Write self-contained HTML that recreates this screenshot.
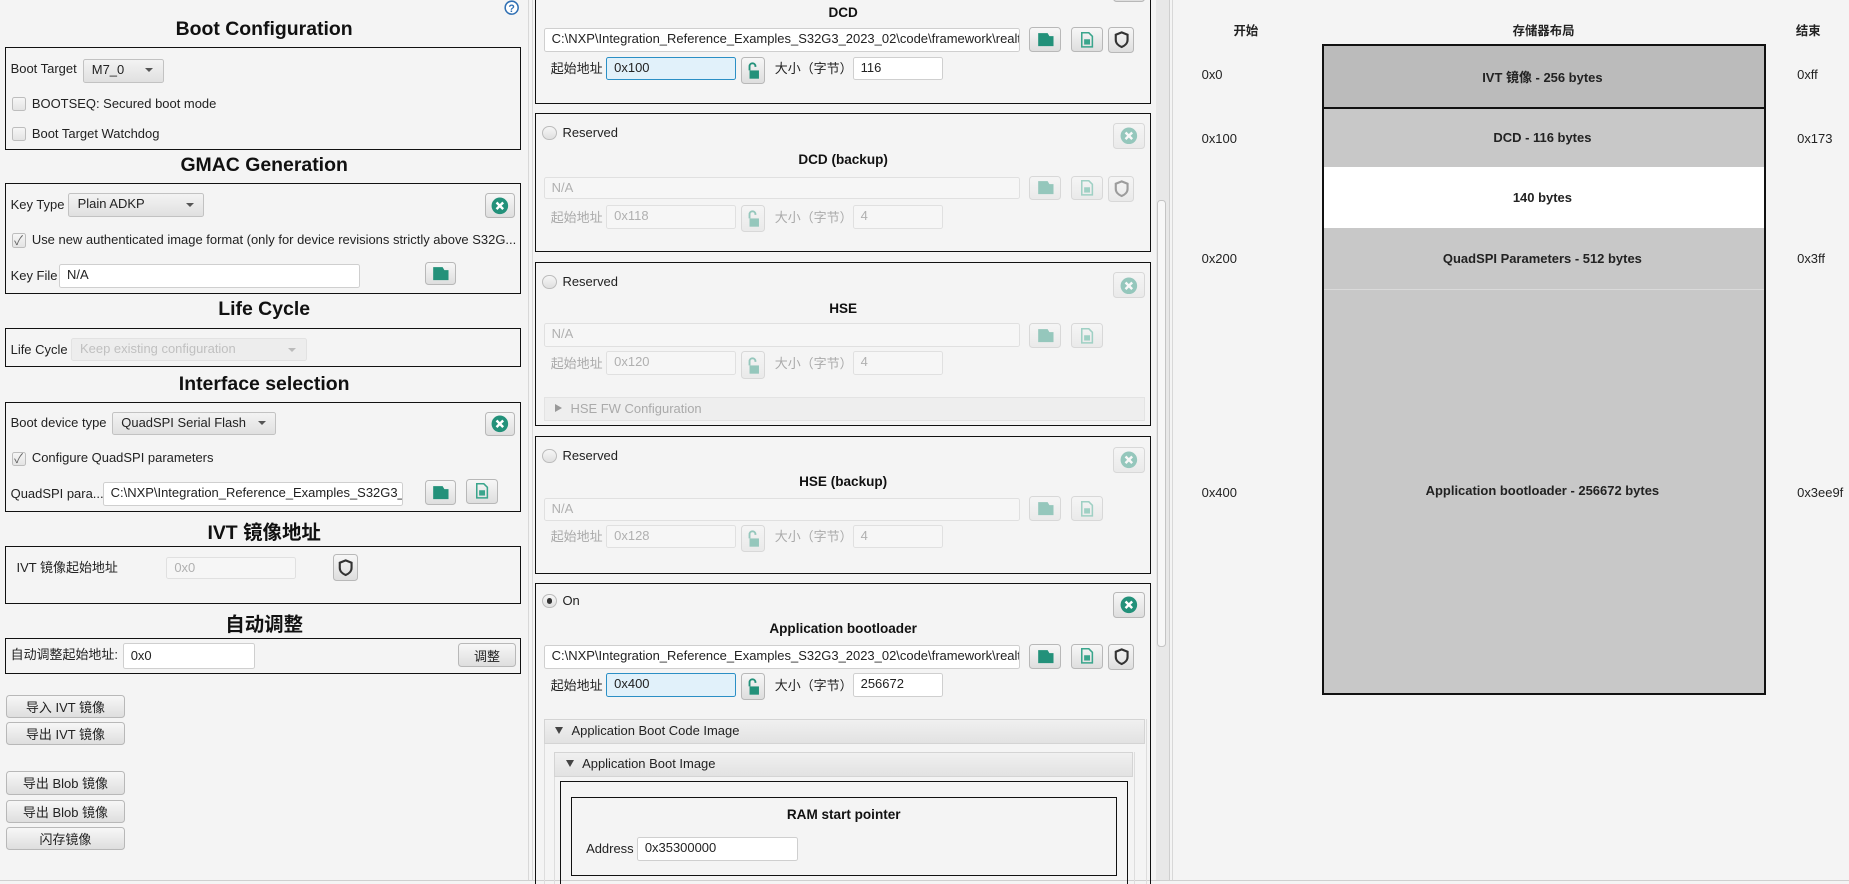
<!DOCTYPE html>
<html><head><meta charset="utf-8">
<style>
html,body{margin:0;padding:0;width:1849px;height:884px;overflow:hidden;background:#f4f4f4;}
#root{position:relative;width:1568px;height:750px;zoom:1.17921;background:#f4f4f4;font-family:"Liberation Sans","Noto Sans CJK SC",sans-serif;font-size:11px;color:#222;overflow:hidden;}
.a{position:absolute;}
.t{position:absolute;font-weight:bold;font-size:16.5px;color:#111;text-align:center;white-space:nowrap;}
.box{position:absolute;border:1.3px solid #111;box-sizing:border-box;}
.lb{position:absolute;white-space:nowrap;line-height:14px;}
.in{position:absolute;background:#fff;border:1px solid #cfcfcf;border-radius:2px;box-sizing:border-box;padding-left:6px;line-height:17px;white-space:nowrap;overflow:hidden;}
.in.dis{background:#f6f6f6;color:#b0b0b0;border-color:#e0e0e0;}
.in.sel{background:#e1f1fa;border:1.5px solid #2b8fc5;}
.btn{position:absolute;background:linear-gradient(#f7f7f7,#dedede);border:1px solid #b8b8b8;border-radius:3px;box-sizing:border-box;text-align:center;white-space:nowrap;display:flex;align-items:center;justify-content:center;}
.btn.dis{opacity:.45;}
.cb{position:absolute;width:12px;height:12px;border:1px solid #bdbdbd;border-radius:2px;background:linear-gradient(#f6f6f6,#e4e4e4);box-sizing:border-box;}
.combo{position:absolute;background:linear-gradient(#f3f3f3,#e0e0e0);border:1px solid #c2c2c2;border-radius:2px;box-sizing:border-box;padding-left:7px;line-height:17px;white-space:nowrap;}
.combo:after{content:"";position:absolute;right:8px;top:7px;border-left:4px solid transparent;border-right:4px solid transparent;border-top:4px solid #555;}
.combo.dis{color:#c0c0c0;background:#ededed;border-color:#e2e2e2;}
.combo.dis:after{border-top-color:#bbb;}
.radio{position:absolute;width:12px;height:12px;border-radius:50%;border:1px solid #bcbcbc;background:linear-gradient(#f6f6f6,#e0e0e0);box-sizing:border-box;}
.bar{position:absolute;background:linear-gradient(#f0f0f0,#e2e2e2);border:1px solid #d4d4d4;box-sizing:border-box;line-height:18px;padding-left:9px;white-space:nowrap;}
.bar:before{content:"";display:inline-block;margin-right:7px;vertical-align:1px;}
.bar.open:before{border-left:3.5px solid transparent;border-right:3.5px solid transparent;border-top:6px solid #444;}
.bar.closed:before{border-top:3.5px solid transparent;border-bottom:3.5px solid transparent;border-left:6px solid #999;}
.mem{position:absolute;left:3px;width:370px;text-align:center;font-weight:bold;font-size:11px;}
.gray{color:#aaa;}
</style></head><body><div id="root">

<!-- LEFT PANEL -->
<svg class="a" style="left:427px;top:0px" width="13" height="13" viewBox="0 0 13 13"><circle cx="6.5" cy="6.5" r="5.5" fill="#fff" stroke="#2f6fb3" stroke-width="1.3"/><text x="6.5" y="10" text-anchor="middle" font-size="9" font-weight="bold" fill="#2f6fb3" font-family="Liberation Sans">?</text></svg>

<div class="t" style="left:0;width:448px;top:15px">Boot Configuration</div>
<div class="box" style="left:4px;top:40px;width:438px;height:87px"></div>
<div class="lb" style="left:9px;top:52px">Boot Target</div>
<div class="combo" style="left:70px;top:50px;width:69px;height:20px">M7_0</div>
<div class="cb" style="left:10px;top:82px"></div><div class="lb" style="left:27px;top:81px">BOOTSEQ: Secured boot mode</div>
<div class="cb" style="left:10px;top:108px"></div><div class="lb" style="left:27px;top:107px">Boot Target Watchdog</div>

<div class="t" style="left:0;width:448px;top:131px">GMAC Generation</div>
<div class="box" style="left:4px;top:155px;width:438px;height:94px"></div>
<div class="lb" style="left:9px;top:167px">Key Type</div>
<div class="combo" style="left:58px;top:164px;width:115px;height:20px">Plain ADKP</div>
<div class="btn" style="left:411px;top:164px;width:26px;height:21px"><svg width="15" height="15" viewBox="0 0 16 16"><circle cx="8" cy="8" r="7.5" fill="#23917a"/><path d="M5 5l6 6M11 5l-6 6" stroke="#fff" stroke-width="2.2"/></svg></div>
<div class="cb" style="left:10px;top:198px"></div><div class="a" style="left:12px;top:195px;color:#666;font-size:11px">✓</div>
<div class="lb" style="left:27px;top:197px">Use new authenticated image format (only for device revisions strictly above S32G...</div>
<div class="lb" style="left:9px;top:227px">Key File</div>
<div class="in" style="left:50px;top:224px;width:255px;height:20px">N/A</div>
<div class="btn" style="left:360px;top:222px;width:27px;height:20px"><svg width="15" height="13" viewBox="0 0 15 13"><path d="M1 1h8l1.5 2.5H14V12H1z" fill="#23917a"/></svg></div>

<div class="t" style="left:0;width:448px;top:253px">Life Cycle</div>
<div class="box" style="left:4px;top:278px;width:438px;height:33px"></div>
<div class="lb" style="left:9px;top:290px">Life Cycle</div>
<div class="combo dis" style="left:60px;top:287px;width:200px;height:19px">Keep existing configuration</div>

<div class="t" style="left:0;width:448px;top:316px">Interface selection</div>
<div class="box" style="left:4px;top:341px;width:438px;height:93px"></div>
<div class="lb" style="left:9px;top:352px">Boot device type</div>
<div class="combo" style="left:95px;top:349px;width:139px;height:20px">QuadSPI Serial Flash</div>
<div class="btn" style="left:411px;top:349px;width:26px;height:21px"><svg width="15" height="15" viewBox="0 0 16 16"><circle cx="8" cy="8" r="7.5" fill="#23917a"/><path d="M5 5l6 6M11 5l-6 6" stroke="#fff" stroke-width="2.2"/></svg></div>
<div class="cb" style="left:10px;top:383px"></div><div class="a" style="left:12px;top:380px;color:#666">✓</div>
<div class="lb" style="left:27px;top:382px">Configure QuadSPI parameters</div>
<div class="lb" style="left:9px;top:412px">QuadSPI para...</div>
<div class="in" style="left:87px;top:409px;width:255px;height:20px">C:\NXP\Integration_Reference_Examples_S32G3_2</div>
<div class="btn" style="left:360px;top:407px;width:27px;height:21px"><svg width="15" height="13" viewBox="0 0 15 13"><path d="M1 1h8l1.5 2.5H14V12H1z" fill="#23917a"/></svg></div>
<div class="btn" style="left:395px;top:406px;width:27px;height:21px"><svg width="12" height="15" viewBox="0 0 12 15"><path d="M1.5 1.5h6l3 3v9h-9z" fill="none" stroke="#3aa58c" stroke-width="1.3"/><rect x="3.5" y="7" width="5" height="4.5" fill="#3aa58c"/></svg></div>

<div class="t" style="left:0;width:448px;top:438px">IVT 镜像地址</div>
<div class="box" style="left:4px;top:463px;width:438px;height:49px"></div>
<div class="lb" style="left:14px;top:475px">IVT 镜像起始地址</div>
<div class="in dis" style="left:141px;top:472px;width:110px;height:19px">0x0</div>
<div class="btn" style="left:282px;top:470px;width:22px;height:23px"><svg width="13" height="15" viewBox="0 0 13 15"><path d="M6.5 1.2L11.5 3.2V7.5C11.5 10.5 9 12.6 6.5 13.6 4 12.6 1.5 10.5 1.5 7.5V3.2z" fill="none" stroke="#333" stroke-width="1.8"/></svg></div>

<div class="t" style="left:0;width:448px;top:516px">自动调整</div>
<div class="box" style="left:4px;top:541px;width:438px;height:31px"></div>
<div class="lb" style="left:9px;top:549px">自动调整起始地址:</div>
<div class="in" style="left:104px;top:545px;width:112px;height:22px;line-height:20px">0x0</div>
<div class="btn" style="left:388px;top:545px;width:50px;height:21px">调整</div>

<div class="btn" style="left:5px;top:589px;width:101px;height:20px">导入 IVT 镜像</div>
<div class="btn" style="left:5px;top:612px;width:101px;height:20px">导出 IVT 镜像</div>
<div class="btn" style="left:5px;top:654px;width:101px;height:20px">导出 Blob 镜像</div>
<div class="btn" style="left:5px;top:678px;width:101px;height:20px">导出 Blob 镜像</div>
<div class="btn" style="left:5px;top:701px;width:101px;height:20px">闪存镜像</div>

<!-- dividers -->
<div class="a" style="left:448px;top:0;width:1px;height:747px;background:#d8d8d8"></div>
<div class="a" style="left:451px;top:0;width:1px;height:747px;background:#d8d8d8"></div>
<div class="a" style="left:0;top:746px;width:1568px;height:1px;background:#cfcfcf"></div>

<!-- MIDDLE PANEL -->
<div class="box" style="left:454px;top:-10px;width:522px;height:98px"></div>
<div class="btn" style="left:944px;top:-12px;width:27px;height:14px"></div>
<div class="t" style="left:454px;width:522px;top:4px;font-size:11.5px">DCD</div>
<div class="in" style="left:461px;top:24px;width:404px;height:20px">C:\NXP\Integration_Reference_Examples_S32G3_2023_02\code\framework\realtime</div>
<div class="btn" style="left:873px;top:23px;width:27px;height:21px"><svg width="15" height="13" viewBox="0 0 15 13"><path d="M1 1h8l1.5 2.5H14V12H1z" fill="#23917a"/></svg></div>
<div class="btn" style="left:908px;top:23px;width:27px;height:21px"><svg width="12" height="15" viewBox="0 0 12 15"><path d="M1.5 1.5h6l3 3v9h-9z" fill="none" stroke="#3aa58c" stroke-width="1.3"/><rect x="3.5" y="7" width="5" height="4.5" fill="#3aa58c"/></svg></div>
<div class="btn" style="left:940px;top:23px;width:22px;height:22px"><svg width="13" height="15" viewBox="0 0 13 15"><path d="M6.5 1.2L11.5 3.2V7.5C11.5 10.5 9 12.6 6.5 13.6 4 12.6 1.5 10.5 1.5 7.5V3.2z" fill="none" stroke="#333" stroke-width="1.8"/></svg></div>
<div class="lb" style="left:467px;top:52px">起始地址</div>
<div class="in sel" style="left:514px;top:48px;width:110px;height:20px">0x100</div>
<div class="btn" style="left:628px;top:48px;width:21px;height:23px"><svg width="12" height="16" viewBox="0 0 12 16"><path d="M3 8V4.5a2.5 2.5 0 0 1 5 0V5" fill="none" stroke="#23917a" stroke-width="1.6"/><rect x="3" y="8" width="8" height="7" fill="#23917a"/></svg></div>
<div class="lb" style="left:657px;top:52px">大小（字节）</div>
<div class="in" style="left:723px;top:48px;width:77px;height:20px">116</div>

<!-- box 2 -->
<div class="box" style="left:454px;top:96px;width:522px;height:118px"></div>
<div class="radio" style="left:460px;top:107px"></div><div class="lb" style="left:477px;top:106px">Reserved</div>
<div class="btn dis" style="left:944px;top:104px;width:27px;height:22px"><svg width="15" height="15" viewBox="0 0 16 16"><circle cx="8" cy="8" r="7.5" fill="#23917a"/><path d="M5 5l6 6M11 5l-6 6" stroke="#fff" stroke-width="2.2"/></svg></div>
<div class="t" style="left:454px;width:522px;top:129px;font-size:11.5px">DCD (backup)</div>
<div class="in dis" style="left:461px;top:150px;width:404px;height:19px">N/A</div>
<div class="btn dis" style="left:873px;top:149px;width:27px;height:21px"><svg width="15" height="13" viewBox="0 0 15 13"><path d="M1 1h8l1.5 2.5H14V12H1z" fill="#23917a"/></svg></div>
<div class="btn dis" style="left:908px;top:149px;width:27px;height:21px"><svg width="12" height="15" viewBox="0 0 12 15"><path d="M1.5 1.5h6l3 3v9h-9z" fill="none" stroke="#3aa58c" stroke-width="1.3"/><rect x="3.5" y="7" width="5" height="4.5" fill="#3aa58c"/></svg></div>
<div class="btn dis" style="left:940px;top:149px;width:22px;height:22px"><svg width="13" height="15" viewBox="0 0 13 15"><path d="M6.5 1.2L11.5 3.2V7.5C11.5 10.5 9 12.6 6.5 13.6 4 12.6 1.5 10.5 1.5 7.5V3.2z" fill="none" stroke="#333" stroke-width="1.8"/></svg></div>
<div class="lb gray" style="left:467px;top:178px">起始地址</div>
<div class="in dis" style="left:514px;top:174px;width:110px;height:20px">0x118</div>
<div class="btn dis" style="left:628px;top:174px;width:21px;height:23px"><svg width="12" height="16" viewBox="0 0 12 16"><path d="M3 8V4.5a2.5 2.5 0 0 1 5 0V5" fill="none" stroke="#23917a" stroke-width="1.6"/><rect x="3" y="8" width="8" height="7" fill="#23917a"/></svg></div>
<div class="lb gray" style="left:657px;top:178px">大小（字节）</div>
<div class="in dis" style="left:723px;top:174px;width:77px;height:20px">4</div>

<!-- box 3 HSE -->
<div class="box" style="left:454px;top:222px;width:522px;height:139px"></div>
<div class="radio" style="left:460px;top:233px"></div><div class="lb" style="left:477px;top:232px">Reserved</div>
<div class="btn dis" style="left:944px;top:231px;width:27px;height:22px"><svg width="15" height="15" viewBox="0 0 16 16"><circle cx="8" cy="8" r="7.5" fill="#23917a"/><path d="M5 5l6 6M11 5l-6 6" stroke="#fff" stroke-width="2.2"/></svg></div>
<div class="t" style="left:454px;width:522px;top:255px;font-size:11.5px">HSE</div>
<div class="in dis" style="left:461px;top:274px;width:404px;height:20px">N/A</div>
<div class="btn dis" style="left:873px;top:274px;width:27px;height:21px"><svg width="15" height="13" viewBox="0 0 15 13"><path d="M1 1h8l1.5 2.5H14V12H1z" fill="#23917a"/></svg></div>
<div class="btn dis" style="left:908px;top:274px;width:27px;height:21px"><svg width="12" height="15" viewBox="0 0 12 15"><path d="M1.5 1.5h6l3 3v9h-9z" fill="none" stroke="#3aa58c" stroke-width="1.3"/><rect x="3.5" y="7" width="5" height="4.5" fill="#3aa58c"/></svg></div>
<div class="lb gray" style="left:467px;top:302px">起始地址</div>
<div class="in dis" style="left:514px;top:298px;width:110px;height:20px">0x120</div>
<div class="btn dis" style="left:628px;top:298px;width:21px;height:23px"><svg width="12" height="16" viewBox="0 0 12 16"><path d="M3 8V4.5a2.5 2.5 0 0 1 5 0V5" fill="none" stroke="#23917a" stroke-width="1.6"/><rect x="3" y="8" width="8" height="7" fill="#23917a"/></svg></div>
<div class="lb gray" style="left:657px;top:302px">大小（字节）</div>
<div class="in dis" style="left:723px;top:298px;width:77px;height:20px">4</div>
<div class="bar closed gray" style="left:461px;top:337px;width:510px;height:20px;background:#eeeeee;border-color:#e3e3e3">HSE FW Configuration</div>

<!-- box 4 HSE backup -->
<div class="box" style="left:454px;top:370px;width:522px;height:117px"></div>
<div class="radio" style="left:460px;top:381px"></div><div class="lb" style="left:477px;top:380px">Reserved</div>
<div class="btn dis" style="left:944px;top:379px;width:27px;height:22px"><svg width="15" height="15" viewBox="0 0 16 16"><circle cx="8" cy="8" r="7.5" fill="#23917a"/><path d="M5 5l6 6M11 5l-6 6" stroke="#fff" stroke-width="2.2"/></svg></div>
<div class="t" style="left:454px;width:522px;top:402px;font-size:11.5px">HSE (backup)</div>
<div class="in dis" style="left:461px;top:422px;width:404px;height:20px">N/A</div>
<div class="btn dis" style="left:873px;top:421px;width:27px;height:21px"><svg width="15" height="13" viewBox="0 0 15 13"><path d="M1 1h8l1.5 2.5H14V12H1z" fill="#23917a"/></svg></div>
<div class="btn dis" style="left:908px;top:421px;width:27px;height:21px"><svg width="12" height="15" viewBox="0 0 12 15"><path d="M1.5 1.5h6l3 3v9h-9z" fill="none" stroke="#3aa58c" stroke-width="1.3"/><rect x="3.5" y="7" width="5" height="4.5" fill="#3aa58c"/></svg></div>
<div class="lb gray" style="left:467px;top:449px">起始地址</div>
<div class="in dis" style="left:514px;top:445px;width:110px;height:20px">0x128</div>
<div class="btn dis" style="left:628px;top:445px;width:21px;height:23px"><svg width="12" height="16" viewBox="0 0 12 16"><path d="M3 8V4.5a2.5 2.5 0 0 1 5 0V5" fill="none" stroke="#23917a" stroke-width="1.6"/><rect x="3" y="8" width="8" height="7" fill="#23917a"/></svg></div>
<div class="lb gray" style="left:657px;top:449px">大小（字节）</div>
<div class="in dis" style="left:723px;top:445px;width:77px;height:20px">4</div>

<!-- box 5 -->
<div class="box" style="left:454px;top:494px;width:522px;height:270px"></div>
<div class="radio" style="left:460px;top:504px"></div><div class="a" style="left:463.5px;top:507.5px;width:5px;height:5px;border-radius:50%;background:#333"></div>
<div class="lb" style="left:477px;top:503px">On</div>
<div class="btn" style="left:944px;top:502px;width:27px;height:22px"><svg width="15" height="15" viewBox="0 0 16 16"><circle cx="8" cy="8" r="7.5" fill="#23917a"/><path d="M5 5l6 6M11 5l-6 6" stroke="#fff" stroke-width="2.2"/></svg></div>
<div class="t" style="left:454px;width:522px;top:527px;font-size:11.5px">Application bootloader</div>
<div class="in" style="left:461px;top:547px;width:404px;height:20px">C:\NXP\Integration_Reference_Examples_S32G3_2023_02\code\framework\realtime</div>
<div class="btn" style="left:873px;top:546px;width:27px;height:21px"><svg width="15" height="13" viewBox="0 0 15 13"><path d="M1 1h8l1.5 2.5H14V12H1z" fill="#23917a"/></svg></div>
<div class="btn" style="left:908px;top:546px;width:27px;height:21px"><svg width="12" height="15" viewBox="0 0 12 15"><path d="M1.5 1.5h6l3 3v9h-9z" fill="none" stroke="#3aa58c" stroke-width="1.3"/><rect x="3.5" y="7" width="5" height="4.5" fill="#3aa58c"/></svg></div>
<div class="btn" style="left:940px;top:546px;width:22px;height:22px"><svg width="13" height="15" viewBox="0 0 13 15"><path d="M6.5 1.2L11.5 3.2V7.5C11.5 10.5 9 12.6 6.5 13.6 4 12.6 1.5 10.5 1.5 7.5V3.2z" fill="none" stroke="#333" stroke-width="1.8"/></svg></div>
<div class="lb" style="left:467px;top:575px">起始地址</div>
<div class="in sel" style="left:514px;top:571px;width:110px;height:20px">0x400</div>
<div class="btn" style="left:628px;top:571px;width:21px;height:23px"><svg width="12" height="16" viewBox="0 0 12 16"><path d="M3 8V4.5a2.5 2.5 0 0 1 5 0V5" fill="none" stroke="#23917a" stroke-width="1.6"/><rect x="3" y="8" width="8" height="7" fill="#23917a"/></svg></div>
<div class="lb" style="left:657px;top:575px">大小（字节）</div>
<div class="in" style="left:723px;top:571px;width:77px;height:20px">256672</div>
<div class="a" style="left:461px;top:610px;width:510px;height:140px;border-left:1px solid #ddd;border-right:1px solid #ddd"></div>
<div class="bar open" style="left:461px;top:610px;width:510px;height:21px">Application Boot Code Image</div>
<div class="a" style="left:470px;top:638px;width:491px;height:112px;border-left:1px solid #ddd;border-right:1px solid #ddd"></div>
<div class="bar open" style="left:470px;top:638px;width:491px;height:21px">Application Boot Image</div>
<div class="box" style="left:475px;top:662px;width:482px;height:100px"></div>
<div class="box" style="left:484px;top:676px;width:463px;height:67px"></div>
<div class="t" style="left:484px;width:463px;top:684px;font-size:11.5px">RAM start pointer</div>
<div class="lb" style="left:497px;top:713px">Address</div>
<div class="in" style="left:540px;top:710px;width:137px;height:20px">0x35300000</div>

<!-- scrollbar -->
<div class="a" style="left:980px;top:0;width:11px;height:746px;background:#e8e8e8;border-right:1px solid #cfcfcf"></div>
<div class="a" style="left:981px;top:170px;width:8px;height:379px;background:#f7f7f7;border:1px solid #c4c4c4;border-radius:3px;box-sizing:border-box"></div>
<div class="a" style="left:994px;top:0;width:1px;height:746px;background:#d8d8d8"></div>

<!-- RIGHT PANEL -->
<div class="a" style="left:1046px;top:18px;font-weight:bold;font-size:10.5px">开始</div>
<div class="a" style="left:1121px;width:376px;top:18px;font-weight:bold;font-size:10.5px;text-align:center">存储器布局</div>
<div class="a" style="left:1523px;top:18px;font-weight:bold;font-size:10.5px">结束</div>
<div class="a" style="left:1121px;top:37px;width:377px;height:552px;border:2px solid #111;box-sizing:border-box;background:#c8c8c8"></div>
<div class="a" style="left:1123px;top:39px;width:373px;height:52px;background:#bbbbbb;border-bottom:2px solid #111"></div>
<div class="a" style="left:1123px;top:142px;width:373px;height:51px;background:#ffffff"></div>
<div class="a" style="left:1123px;top:245px;width:373px;height:1px;background:#dadada"></div>
<div class="mem a" style="left:1123px;top:57px">IVT 镜像 - 256 bytes</div>
<div class="mem a" style="left:1123px;top:110px">DCD - 116 bytes</div>
<div class="mem a" style="left:1123px;top:161px">140 bytes</div>
<div class="mem a" style="left:1123px;top:213px">QuadSPI Parameters - 512 bytes</div>
<div class="mem a" style="left:1123px;top:410px">Application bootloader - 256672 bytes</div>
<div class="lb" style="left:1019px;top:57px">0x0</div>
<div class="lb" style="left:1019px;top:111px">0x100</div>
<div class="lb" style="left:1019px;top:213px">0x200</div>
<div class="lb" style="left:1019px;top:411px">0x400</div>
<div class="lb" style="left:1524px;top:57px">0xff</div>
<div class="lb" style="left:1524px;top:111px">0x173</div>
<div class="lb" style="left:1524px;top:213px">0x3ff</div>
<div class="lb" style="left:1524px;top:411px">0x3ee9f</div>

</div></body></html>
